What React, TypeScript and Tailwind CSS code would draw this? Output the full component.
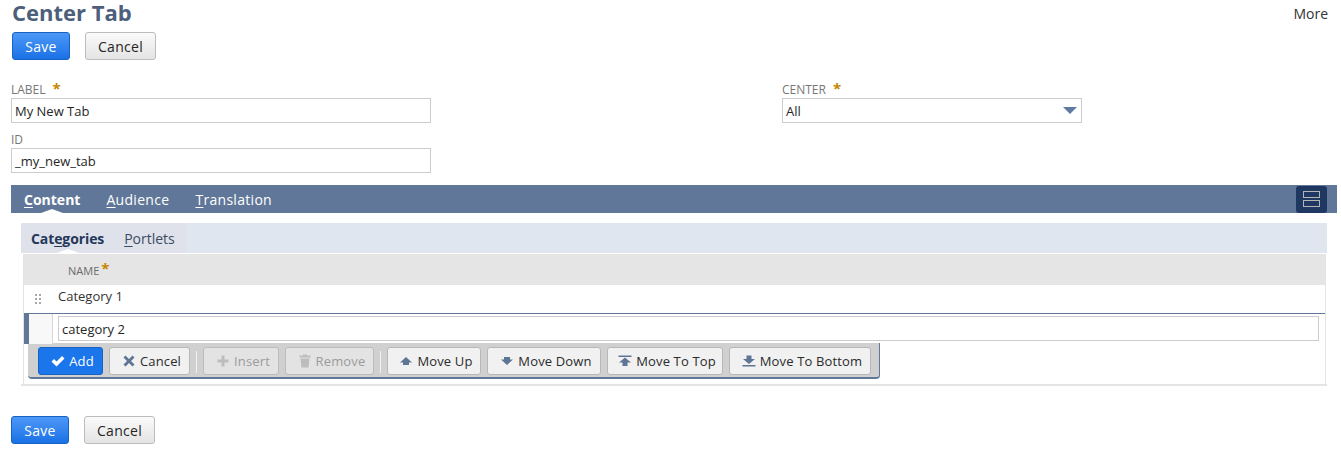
import React from "react";

const font = { fontFamily: '"Open Sans", sans-serif' };

function Star({ className = "" }: { className?: string }) {
    return <span className={`text-[#c78500] font-bold text-[15px] leading-none ${className}`}>*</span>;
}

function FormButton({ primary, children, className = "" }: { primary?: boolean; children: React.ReactNode; className?: string }) {
    const look = primary
        ? "bg-gradient-to-b from-[#4c98f7] to-[#1871e6] border-[#1763c2] text-white"
        : "bg-gradient-to-b from-[#fafafa] to-[#e4e4e4] border-[#bcbcbc] text-[#262626]";
    return (
        <button className={`h-[28px] rounded-[3px] border text-[14px] tracking-[0.3px] flex items-center justify-center ${look} ${className}`}>
            {children}
        </button>
    );
}

function Field({ label, required, value, className = "" }: { label: string; required?: boolean; value: string; className?: string }) {
    return (
        <div className={className}>
            <div className="h-[16px] flex items-start text-[12px] leading-[16px] text-[#777777]">
                {label}
                {required && <Star className="ml-[7px] -mt-[1px]" />}
            </div>
            <div className="h-[25px] border border-[#cccccc] flex items-center px-[3px] pt-[2px] text-[13px] text-[#262626]">{value}</div>
        </div>
    );
}

function Accel({ children }: { children: string }) {
    return <span className="underline underline-offset-2">{children}</span>;
}

function Pointer() {
    return <span className="absolute left-1/2 -translate-x-1/2 bottom-0 w-0 h-0 border-x-[11px] border-x-transparent border-b-[4px] border-b-white" />;
}

function Glyph({ children }: { children: React.ReactNode }) {
    return (
        <svg width="14" height="14" viewBox="0 0 14 14" className="shrink-0" fill="currentColor">
            {children}
        </svg>
    );
}

function ToolButton({ icon, label, width, disabled, primary }: { icon: React.ReactNode; label: string; width: string; disabled?: boolean; primary?: boolean }) {
    let look = "bg-[#f1f1f1] border-[#b7b7b7] text-[#2b2b2b]";
    if (disabled) look = "bg-[#e3e3e3] border-[#bcbcbc] text-[#9b9b9b]";
    if (primary) look = "bg-[#1b76ec] border-[#1763c2] text-white";
    return (
        <button className={`h-[28px] rounded-[3px] border flex items-center justify-center gap-[4px] pl-[4px] text-[13px] font-medium tracking-[0.15px] ${look} ${width}`}>
            <span className={primary ? "text-white" : disabled ? "text-[#bdbdbd]" : "text-[#5f7594]"}>{icon}</span>
            <span className="pt-[2px]">{label}</span>
        </button>
    );
}

function Sep() {
    return <div className="w-px h-[22px] bg-[#f2f2f2]" />;
}

export default function App() {
    return (
        <div className="w-[1341px] h-[457px] bg-white overflow-hidden" style={font}>
            <div className="flex justify-between items-start pl-[12px] pr-[13px] h-[32px]">
                <h1 className="text-[22px] leading-[24px] font-bold text-[#4d5f7a]">Center Tab</h1>
                <span className="text-[14px] leading-[28px] text-[#333333]">More</span>
            </div>

            <div className="flex gap-[15px] pl-[12px]">
                <FormButton primary className="w-[58px]">Save</FormButton>
                <FormButton className="w-[71px]">Cancel</FormButton>
            </div>

            <div className="flex pl-[11px] pt-[22px] h-[125px]">
                <div className="w-[771px]">
                    <Field label="LABEL" required value="My New Tab" className="w-[420px]" />
                    <Field label="ID" value="_my_new_tab" className="w-[420px] mt-[9px]" />
                </div>
                <Field label="CENTER" required value="All" className="w-[300px] relative" />
                <svg width="14" height="7" viewBox="0 0 14 7" className="-ml-[19px] mt-[25px]" fill="#5f7ba3">
                    <path d="M0 0h14L7 7z" />
                </svg>
            </div>

            <div className="ml-[11px] mr-[4px] h-[28px] bg-[#607799] flex items-center justify-between pr-[10px]">
                <div className="flex text-[14px] text-white pl-[13px] gap-[26px] h-full items-center">
                    <span className="relative h-full flex items-center font-bold">
                        <span><Accel>C</Accel>ontent</span>
                        <Pointer />
                    </span>
                    <span className="tracking-[0.3px]"><Accel>A</Accel>udience</span>
                    <span className="tracking-[0.3px]"><Accel>T</Accel>ranslation</span>
                </div>
                <button className="w-[31px] h-[27px] rounded-[3px] bg-[#1f3861] flex flex-col items-center justify-center gap-[2px]">
                    <span className="block w-[17px] h-[7px] border border-[#b5b5b5]" />
                    <span className="block w-[17px] h-[7px] border border-[#b5b5b5]" />
                </button>
            </div>

            <div className="ml-[21px] mr-[14px] mt-[10px] h-[163px] border-b-2 border-[#e4e4e4]">
                <div className="h-[30px] bg-[#dfe6f0] flex">
                    <div className="w-[165px] bg-[#dfe2ea] flex items-center pl-[10px] gap-[20px] text-[14px]">
                        <span className="relative h-full flex items-center font-bold tracking-[-0.1px] text-[#24385b]">
                            <span>Cat<Accel>e</Accel>gories</span>
                            <Pointer />
                        </span>
                        <span className="text-[#3c4b63]"><Accel>P</Accel>ortlets</span>
                    </div>
                </div>

                <div className="ml-[2px] mr-px h-[131px] border-x border-[#e4e4e4]">
                    <div className="mt-px h-[31px] bg-[#e5e5e5] flex items-center pl-[44px] pt-[3px] text-[11px] text-[#6b6b6b]">
                        NAME
                        <Star className="ml-[2px] -mt-[6px]" />
                    </div>
                    <div className="h-[28px] flex items-center text-[13px] text-[#333333]">
                        <svg width="6" height="10" viewBox="0 0 6 10" fill="#a8a8a8" className="ml-[11px]">
                            <rect x="0" y="0" width="2" height="2" />
                            <rect x="4" y="0" width="2" height="2" />
                            <rect x="0" y="4" width="2" height="2" />
                            <rect x="4" y="4" width="2" height="2" />
                            <rect x="0" y="8" width="2" height="2" />
                            <rect x="4" y="8" width="2" height="2" />
                        </svg>
                        <span className="ml-[17px] -mt-[4px]">Category 1</span>
                    </div>
                    <div className="h-[31px] border-t border-[#5f7799] flex bg-white">
                        <div className="w-[5px] bg-[#5f7799]" />
                        <div className="w-[24px] bg-[#f8f8f8] border-r border-[#d8d8d8]" />
                        <div className="flex-1 pl-[5px] pr-[6px] pt-[2px]">
                            <div className="h-[25px] border border-[#cccccc] flex items-center px-[3px] pt-[2px] text-[13px] text-[#262626]">category 2</div>
                        </div>
                    </div>
                    <div className="ml-[4px] w-[852px] h-[36px] bg-[#d0d0d0] border border-t-0 border-l-0 border-[#5f7799] border-b-2 rounded-b-[4px] flex items-start gap-[6px] pl-[10px] pt-[4px] -mt-px">
                        <ToolButton primary width="w-[65px]" label="Add" icon={<Glyph><path d="M0.500 7.500l2.500-2.500 2.500 2.500L11 2l2.500 2.500L5.500 12.500z" /></Glyph>} />
                        <ToolButton width="w-[81px]" label="Cancel" icon={<Glyph><path d="M1.500 3.500l2-2L7 5l3.500-3.500 2 2L9 7l3.500 3.500-2 2L7 9l-3.500 3.500-2-2L5 7z" /></Glyph>} />
                        <div className="self-center"><Sep /></div>
                        <ToolButton disabled width="w-[76px]" label="Insert" icon={<Glyph><path d="M5.500 1.500h3v4h4v3h-4v4h-3v-4h-4v-3h4z" /></Glyph>} />
                        <ToolButton disabled width="w-[89px]" label="Remove" icon={<Glyph><path d="M5 0.500h4v1h3.500v2h-11v-2H5zM2.500 4.500h9L10.500 13.500h-7z" /></Glyph>} />
                        <div className="self-center"><Sep /></div>
                        <ToolButton width="w-[94px]" label="Move Up" icon={<Glyph><path d="M1 8.500l6-5.500 6 5.500h-3V11H4V8.500z" /></Glyph>} />
                        <ToolButton width="w-[114px]" label="Move Down" icon={<Glyph><path d="M4 3h6v2.500h3L7 11 1 5.500h3z" /></Glyph>} />
                        <ToolButton width="w-[116px]" label="Move To Top" icon={<Glyph><path d="M0.500 1.500h13v1.500h-13zM7 3.500l6 5h-3.500V12h-5V8.500H1z" /></Glyph>} />
                        <ToolButton width="w-[142px]" label="Move To Bottom" icon={<Glyph><path d="M4.500 1.500h5V5H13l-6 5-6-5h3.500zM0.500 11h13v1.500h-13z" /></Glyph>} />
                    </div>
                </div>
            </div>

            <div className="flex gap-[15px] pl-[11px] mt-[30px]">
                <FormButton primary className="w-[58px]">Save</FormButton>
                <FormButton className="w-[71px]">Cancel</FormButton>
            </div>
        </div>
    );
}
